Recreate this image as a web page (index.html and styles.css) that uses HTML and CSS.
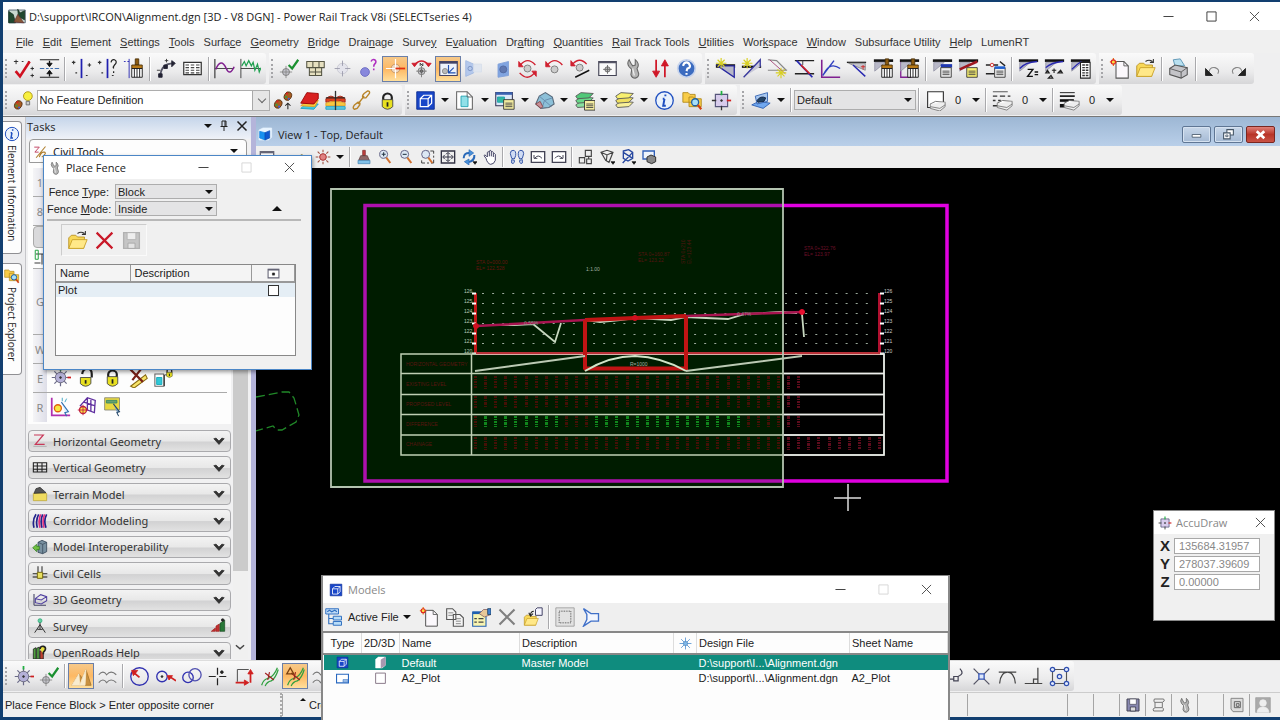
FILE: index.html
```html
<!DOCTYPE html>
<html lang="en">
<head>
  <meta charset="UTF-8">
  <title>Power Rail Track V8i</title>
  <link rel="stylesheet" href="styles.css">
</head>
<body>
  <div class="app">
    <header class="titlebar">
      <span class="app-icon" data-icon="app"></span>
      <h1>D:\support\IRCON\Alignment.dgn [3D - V8 DGN] - Power Rail Track V8i (SELECTseries 4)</h1>
      <div class="win-buttons" data-window="min max close"></div>
    </header>

    <nav class="menubar">
      <a href="#"><u>F</u>ile</a>
      <a href="#"><u>E</u>dit</a>
      <a href="#"><u>E</u>lement</a>
      <a href="#"><u>S</u>ettings</a>
      <a href="#"><u>T</u>ools</a>
      <a href="#">Surfa<u>c</u>e</a>
      <a href="#"><u>G</u>eometry</a>
      <a href="#"><u>B</u>ridge</a>
      <a href="#">Drai<u>n</u>age</a>
      <a href="#">Surve<u>y</u></a>
      <a href="#">E<u>v</u>aluation</a>
      <a href="#">Dr<u>a</u>fting</a>
      <a href="#"><u>Q</u>uantities</a>
      <a href="#"><u>R</u>ail Track Tools</a>
      <a href="#"><u>U</u>tilities</a>
      <a href="#">Wor<u>k</u>space</a>
      <a href="#"><u>W</u>indow</a>
      <a href="#">Subsurface Utility</a>
      <a href="#"><u>H</u>elp</a>
      <a href="#">LumenRT</a>
    </nav>

    <!-- main toolbars -->
    <div class="toolrow">
      <div class="group g-civil" data-tools="regress grade | ptline ptquery ptbrush | curve table | sine wave"></div>
      <div class="group g-snap" data-tools="snapcheck bricks target dotquery *orange north *winaxes cubefade cubeblue rotate arc arcline wintarget wrench updown help"></div>
      <div class="group g-profile" data-tools="prof1 prof2 prof3 prof4 prof5 prof6 profbrush profbrush2 | profdoc profred profbox | profz proftri proflist"></div>
      <div class="group g-standard" data-tools="newfile open | printer | undo redo"></div>
    </div>
    <div class="toolrow">
      <div class="group g-feature">
        <span data-tools="bulb"></span>
        <label class="select feature-select"><select aria-label="Feature definition"><option>No Feature Definition</option></select></label>
        <span data-tools="palettes redlayers section chain lock"></span>
      </div>
      <div class="group g-primary" data-tools="model v doc v card v gem v layers v yellow v info folders accudraw"></div>
      <div class="group g-attr">
        <span data-tools="bluetpl v |"></span>
        <label class="select level-select"><select aria-label="Active level"><option>Default</option></select></label>
        <span data-tools="| color"></span><span class="num">0</span>
        <span data-tools="v | style"></span><span class="num">0</span>
        <span data-tools="v | weight"></span><span class="num">0</span>
        <span data-tools="v"></span>
      </div>
    </div>

    <main class="work">
      <div class="side-tabs">
        <button><span data-icon="info"></span>Element Information</button>
        <button><span data-icon="folders"></span>Project Explorer</button>
      </div>

      <section class="tasks">
        <div class="tasks-head">
          <h2>Tasks</h2>
          <span class="caret"></span>
          <span data-icon="pin"></span>
          <span data-icon="close"></span>
        </div>
        <button class="civil-tools"><span data-icon="civil"></span>Civil Tools<i class="caret"></i></button>
        <div class="tasks-body">
          <div class="tasks-list">
            <div class="task-box">
              <div class="task-row"><b>1</b></div>
              <div class="task-row"><b>8</b></div>
              <button class="task-tab" aria-label="Civil tools group"><span data-icon="civil"></span></button>
              <div class="task-row short"><span data-icon="plumb"></span></div>
              <div class="task-row tall"><b>G</b></div>
              <div class="task-row"><b>W</b></div>
              <div class="task-row"><b>E</b><span data-tools="gear unlock lock ruler doclock"></span></div>
              <div class="task-row"><b>R</b><span data-tools="axispick gridgear docpick"></span></div>
            </div>
            <div class="accordion">
              <button><span data-icon="horiz"></span>Horizontal Geometry<i data-icon="chev"></i></button>
              <button><span data-icon="vert"></span>Vertical Geometry<i data-icon="chev"></i></button>
              <button><span data-icon="terrain"></span>Terrain Model<i data-icon="chev"></i></button>
              <button><span data-icon="corridor"></span>Corridor Modeling<i data-icon="chev"></i></button>
              <button><span data-icon="interop"></span>Model Interoperability<i data-icon="chev"></i></button>
              <button><span data-icon="cells"></span>Civil Cells<i data-icon="chev"></i></button>
              <button><span data-icon="geo3d"></span>3D Geometry<i data-icon="chev"></i></button>
              <button><span data-icon="survey"></span>Survey<i data-icon="surveygo"></i></button>
              <button><span data-icon="books"></span>OpenRoads Help<i data-icon="chev"></i></button>
            </div>
          </div>
          <div class="scrollbar"><div class="thumb"></div><span data-icon="down"></span></div>
        </div>
      </section>

      <section class="view">
        <div class="view-title">
          <span data-icon="viewcube"></span>
          <h2>View 1 - Top, Default</h2>
          <div class="mdi">
            <button aria-label="Minimize view"><span data-icon="mdimin"></span></button>
            <button aria-label="Restore view"><span data-icon="mdirestore"></span></button>
            <button class="red" aria-label="Close view"><span data-icon="mdiclose"></span></button>
          </div>
        </div>
        <div class="view-tools" data-tools="winsmall v blank sun v | broom zoomin zoomout zoomwin fit rotateview hand | feet viewprev viewnext | copyview clip clipmask display"></div>
        <div class="canvas"><svg id="drawing" aria-label="Alignment profile drawing"></svg></div>
      </section>
    </main>

    <div class="toolrow bottom">
      <div class="group g-bottom">
        <span data-tools="gear snapcheck | *hills contours | circler circle2 circles crosspt redaxes greenpt *greentri contours"></span>
        <span data-tools="nearpt intersect tangent perp boxpts"></span>
      </div>
    </div>
    <footer class="status">
      <span class="prompt">Place Fence Block &gt; Enter opposite corner</span>
      <span class="cell create"><i></i>Create</span>
      <span class="cell wide"></span>
      <span class="cell"></span>
      <span class="cell"></span>
      <span class="cell" data-icon="save"></span>
      <span class="cell" data-icon="scroll"></span>
      <span class="cell" data-icon="wrench"></span>
      <span class="cell"></span>
      <span class="cell" data-icon="sheet"></span>
      <span class="cell" data-icon="user"></span>
    </footer>
  </div>

  <!-- floating tool windows -->
  <section class="window fence">
    <div class="win-head">
      <span data-icon="wrench"></span>
      <h3>Place Fence</h3>
      <div class="win-buttons" data-window="min max close"></div>
    </div>
    <div class="fence-form">
      <label for="ftype">Fence <u>T</u>ype:</label>
      <span class="select"><select id="ftype"><option>Block</option></select></span>
      <i></i>
      <label for="fmode">Fence <u>M</u>ode:</label>
      <span class="select"><select id="fmode"><option>Inside</option></select></span>
      <i class="caret up"></i>
    </div>
    <div class="fence-tools" data-tools="open redx savegray"></div>
    <div class="fence-list">
      <table>
        <thead><tr><th class="c-name">Name</th><th>Description</th><th class="c-check"><span data-icon="winsmall"></span></th></tr></thead>
        <tbody><tr><td>Plot</td><td></td><td class="c-check"><input type="checkbox" aria-label="Plot active"></td></tr></tbody>
      </table>
    </div>
  </section>

  <section class="window models">
    <div class="win-head">
      <span data-icon="model"></span>
      <h3>Models</h3>
      <div class="win-buttons" data-window="min max close"></div>
    </div>
    <div class="models-tools">
      <span data-icon="tree"></span>
      <button class="active-file">Active File <i class="caret"></i></button>
      <span data-tools="newfile copydoc props grayx import | dotted funnel"></span>
    </div>
    <table>
      <thead>
        <tr><th class="m-type">Type</th><th class="m-dim">2D/3D</th><th class="m-name">Name</th><th class="m-desc">Description</th><th class="m-sun"><span data-icon="bluesun"></span></th><th class="m-file">Design File</th><th>Sheet Name</th></tr>
      </thead>
      <tbody>
        <tr class="selected"><td class="mid"><span data-icon="model"></span></td><td class="mid"><span data-icon="cube3d"></span></td><td>Default</td><td>Master Model</td><td></td><td>D:\support\I...\Alignment.dgn</td><td></td></tr>
        <tr><td class="mid"><span data-icon="sheetmodel"></span></td><td class="mid"><span data-icon="flat"></span></td><td>A2_Plot</td><td></td><td></td><td>D:\support\I...\Alignment.dgn</td><td>A2_Plot</td></tr>
      </tbody>
    </table>
  </section>

  <section class="window accudraw">
    <div class="win-head">
      <span data-icon="accudraw"></span>
      <h3>AccuDraw</h3>
      <div class="win-buttons" data-window="close"></div>
    </div>
    <div class="coords">
      <label for="cx">X</label><input id="cx" type="text" value="135684.31957">
      <label for="cy">Y</label><input id="cy" type="text" value="278037.39609">
      <label for="cz">Z</label><input id="cz" type="text" value="0.00000">
    </div>
  </section>

  <script src="script.js"></script>
</body>
</html>
```

FILE: styles.css
```css
* {
  box-sizing: border-box;
}
body {
  margin: 0;
  height: 100vh;
  overflow: hidden;
  position: relative;
  background: #123f70;
  font-family: "Liberation Sans", Arial, sans-serif;
  font-size: 11px;
  color: #222;
}
h1, h2, h3 {
  margin: 0;
  font-family: "Open Sans", "Noto Sans", sans-serif;
  font-weight: normal;
  white-space: nowrap;
}
button, select, input {
  font: inherit;
  color: inherit;
}
button {
  border: 0;
  padding: 0;
  background: none;
}
svg {
  display: block;
}
[data-icon] {
  display: inline-flex;
  flex: none;
  width: 18px;
  height: 18px;
}
[data-icon] svg {
  width: 100%;
  height: 100%;
}
.app {
  height: 100%;
  display: flex;
  flex-direction: column;
  padding: 2px 0 3px 3px;
}

/* title and menu */
.titlebar {
  display: flex;
  align-items: center;
  height: 28px;
  flex: none;
  background: #fff;
  padding-left: 5px;
}
.titlebar h1 {
  font-size: 11px;
  flex: 1;
  padding-left: 3px;
  color: #222;
}
.titlebar .win-buttons {
  padding-right: 4px;
}
.win-buttons {
  display: flex;
}
.win-buttons button {
  width: 43px;
  height: 24px;
  display: flex;
  justify-content: center;
  align-items: center;
}
.win-buttons svg {
  width: 11px;
  height: 11px;
}
.menubar {
  display: flex;
  flex: none;
  align-items: center;
  gap: 9px;
  height: 23px;
  background: #f0f0f0;
  padding-left: 13px;
}
.menubar a {
  color: #333;
  text-decoration: none;
  white-space: nowrap;
}

/* toolbars */
.toolrow {
  display: flex;
  flex: none;
  gap: 3px;
  height: 31px;
  background: #efeff0;
}
.menubar + .toolrow {
  height: 32px;
}
.group {
  display: flex;
  align-items: center;
  justify-content: space-between;
  flex: none;
  padding: 0 2px 0 7px;
  background: linear-gradient(#fafafa, #ebebec 60%, #d6d6d8);
  border-radius: 0 3px 3px 0;
  margin-bottom: 1px;
  position: relative;
}
.group::before {
  content: "";
  position: absolute;
  left: 2px;
  top: 6px;
  bottom: 6px;
  border-left: 2px dotted #a5a5a8;
}
.group [data-tools] {
  display: flex;
  align-items: center;
}
.g-civil { width: 263px; }
.g-snap { width: 433px; }
.g-profile { width: 391px; }
.g-standard { width: 155px; }
.g-feature { width: 399px; }
.g-primary { width: 332px; }
.g-attr {
  width: 382px;
  justify-content: flex-start;
}
.g-attr .caret {
  margin: 0 3px 0 4px;
}
.tool {
  width: 26px;
  height: 26px;
  display: flex;
  flex: none;
  align-items: center;
  justify-content: center;
  border: 1px solid transparent;
}
.tool svg {
  width: 21px;
  height: 21px;
}
.tool.active {
  border-color: #6b7fa8;
  background: linear-gradient(#f6c98a, #fdb863 50%, #ffdf9c);
}
.sep {
  width: 2px;
  height: 24px;
  flex: none;
  margin: 0 2px;
  border-left: 1px solid #a9a9ac;
  border-right: 1px solid #fff;
}
.caret {
  display: inline-block;
  flex: none;
  width: 0;
  height: 0;
  border: 4px solid transparent;
  border-top-color: #111;
  border-bottom: 0;
}
.caret.up {
  border-top: 0;
  border-bottom: 5px solid #111;
  border-left-width: 5px;
  border-right-width: 5px;
}
.select {
  position: relative;
  display: block;
}
.select::after {
  content: "";
  position: absolute;
  right: 4px;
  top: 50%;
  margin-top: -2px;
  border: 4px solid transparent;
  border-top-color: #111;
  border-bottom: 0;
  pointer-events: none;
}
.select select {
  appearance: none;
  width: 100%;
  height: 100%;
  border: 1px solid #adadad;
  background: #e4e4e5;
  padding: 0 2px;
  border-radius: 0;
}
.feature-select {
  width: 233px;
  height: 21px;
}
.feature-select select {
  background: linear-gradient(90deg, #fff calc(100% - 17px), #a9a9a9 0, #a9a9a9 calc(100% - 16px), #e6e6e6 0);
}
.feature-select::after {
  width: 5px;
  height: 5px;
  margin-top: -4px;
  right: 5px;
  border: solid #666;
  border-width: 0 1px 1px 0;
  transform: rotate(45deg);
}
.level-select {
  width: 122px;
  height: 20px;
}
.num {
  width: 14px;
  margin: 0 3px;
  text-align: center;
}

/* work area */
.work {
  flex: 1;
  min-height: 0;
  display: flex;
  border-top: 1px solid #777;
}
.side-tabs {
  width: 23px;
  flex: none;
  background: #ececee;
  border-right: 1px solid #c6c6ca;
  padding-top: 4px;
  display: flex;
  flex-direction: column;
  gap: 9px;
}
.side-tabs button {
  writing-mode: vertical-rl;
  display: flex;
  align-items: center;
  gap: 3px;
  width: 19px;
  padding: 4px 0 12px;
  background: #fdfdfd;
  border: 1px solid #8f8f93;
  border-left: 0;
  border-radius: 0 4px 4px 0;
  font-family: "Open Sans", "Noto Sans", sans-serif;
  font-size: 10px;
  white-space: nowrap;
}
.side-tabs [data-icon] {
  width: 16px;
  height: 16px;
}
.tasks {
  width: 225px;
  flex: none;
  display: flex;
  flex-direction: column;
  background: #f1f1f2;
  overflow: hidden;
  font-family: "Noto Sans", sans-serif;
}
.tasks-head {
  display: flex;
  align-items: center;
  height: 22px;
  flex: none;
  gap: 6px;
  padding: 0 3px 4px 1px;
  background: linear-gradient(#c5d5ea, #eff2f8);
}
.tasks-head h2 {
  flex: 1;
  font-size: 11px;
}
.tasks-head [data-icon] {
  width: 12px;
  height: 12px;
}
.civil-tools {
  display: flex;
  align-items: center;
  gap: 5px;
  height: 24px;
  flex: none;
  margin: 0 4px 0 3px;
  padding: 0 8px 0 3px;
  background: #fdfdfd;
  border: 1px solid #999;
  border-radius: 4px 4px 0 0;
}
.civil-tools [data-icon] {
  width: 15px;
  height: 15px;
}
.civil-tools .caret {
  margin-left: auto;
}
.tasks-body {
  flex: 1;
  min-height: 0;
  display: flex;
  gap: 2px;
  padding: 0 3px 1px 2px;
}
.tasks-list {
  width: 203px;
  display: flex;
  flex-direction: column;
  overflow: hidden;
}
.task-box {
  flex: none;
  background: #fdfdfd;
  padding: 5px 4px 2px 5px;
  margin-bottom: 6px;
}
.task-row {
  display: flex;
  height: 29px;
  border-bottom: 1px solid #aaa;
}
.task-row:last-child {
  border: 0;
}
.task-row b {
  width: 14px;
  display: flex;
  align-items: center;
  justify-content: center;
  font-weight: normal;
  color: #888;
  background: linear-gradient(90deg, #f5f5f7, #dedee8);
}
.task-row.short {
  height: 21px;
}
.task-row.tall {
  height: 66px;
}
.task-row [data-tools] {
  display: flex;
}
.task-tab {
  display: block;
  width: 60px;
  height: 22px;
  background: #d9d9db;
  border: 1px solid #aaa;
  border-radius: 4px;
}
.accordion {
  flex: 1;
  display: grid;
  grid-template-rows: repeat(9, 1fr);
  gap: 4px;
  margin-bottom: -5px;
}
.accordion button {
  display: flex;
  align-items: center;
  gap: 5px;
  min-height: 0;
  padding: 0 4px 0 3px;
  border: 1px solid #aaaaad;
  border-radius: 4px;
  background: linear-gradient(#f3f3f3, #e8e8e8 50%, #d2d2d3 55%, #e2e2e2);
  color: #333;
}
.accordion i {
  margin-left: auto;
}
.accordion [data-icon] {
  width: 16px;
  height: 16px;
}
.accordion i[data-icon="chev"] {
  width: 14px;
  height: 14px;
}
.scrollbar {
  flex: 1;
  display: flex;
  flex-direction: column;
  justify-content: space-between;
  background: #f0f0f0;
  padding-bottom: 5px;
}
.scrollbar .thumb {
  height: 83%;
  background: #cbcbcb;
}
.scrollbar [data-icon] {
  width: 14px;
  height: 14px;
}
.view {
  flex: 1;
  min-width: 0;
  display: flex;
  flex-direction: column;
  border-left: 5px solid #b4b4da;
}
.view-title {
  display: flex;
  align-items: center;
  gap: 5px;
  height: 29px;
  flex: none;
  padding: 5px 0 0 1px;
  background: linear-gradient(#9db7d4, #b9cfe9);
}
.view-title h2 {
  flex: 1;
  font-size: 11px;
}
.view-title > [data-icon] {
  width: 16px;
  height: 16px;
}
.mdi {
  display: flex;
  gap: 3px;
  padding-right: 5px;
}
.mdi button {
  width: 29px;
  height: 17px;
  display: flex;
  align-items: center;
  justify-content: center;
  border: 1px solid #5f7694;
  border-radius: 2px;
  background: linear-gradient(#c9d8ea, #a5bad4);
  box-shadow: inset 0 0 0 1px #d6e2f0;
}
.mdi .red {
  background: linear-gradient(#e08078, #b83428 50%, #c95245);
  border-color: #7a2620;
  box-shadow: none;
}
.mdi [data-icon] {
  width: 13px;
  height: 13px;
}
.view-tools {
  height: 22px;
  flex: none;
  display: flex;
  align-items: center;
  background: #efefef;
}
.view-tools .tool {
  width: 21px;
  height: 20px;
}
.view-tools .tool svg {
  width: 16px;
  height: 16px;
}
.view-tools .caret {
  margin: 0 3px;
}
.view-tools .sep {
  height: 20px;
}
.canvas {
  flex: 1;
  min-height: 0;
  background: #000;
}
.canvas svg {
  width: 100%;
  height: 100%;
}
#drawing text {
  font-size: 5px;
}

/* bottom bars */
.toolrow.bottom {
  border-top: 1px solid #ddd;
  height: 32px;
}
.g-bottom {
  width: 1071px;
}
.status {
  display: flex;
  flex: none;
  align-items: stretch;
  height: 25px;
  background: #f0f0f0;
  border-top: 1px solid #ccc;
  padding-right: 5px;
}
.status .prompt {
  width: 279px;
  padding: 6px 0 0 2px;
  border-right: 2px dotted #aaa;
}
.status .cell {
  width: 26px;
  height: auto;
  border-left: 1px solid #a5a5a5;
  margin: 1px 0 1px;
  padding: 3px;
  align-items: center;
  justify-content: center;
}
.status .create {
  flex: 1;
  display: flex;
  justify-content: flex-start;
  padding-left: 20px;
  gap: 3px;
}
.status .create i {
  border: 3px solid transparent;
  border-bottom-color: #111;
  border-top: 0;
  margin-left: -3px;
  margin-bottom: 11px;
}
.status .wide {
  width: 100px;
}
.status .cell svg {
  width: 16px;
  height: 16px;
}

/* floating windows */
.window {
  position: absolute;
  background: #f0f0f0;
}
.win-head {
  display: flex;
  align-items: center;
  height: 23px;
  background: #fff;
  padding-left: 4px;
  gap: 4px;
}
.win-head h3 {
  flex: 1;
  font-size: 11px;
}
.win-head [data-icon] {
  width: 14px;
  height: 14px;
}
.window .win-buttons button:nth-child(2) {
  opacity: 0.2;
}
.fence {
  left: 43px;
  top: 155px;
  width: 269px;
  height: 215px;
  border: 1px solid #4b86c6;
  box-shadow: 1px 2px 4px rgba(0, 0, 0, 0.4);
}
.fence-form {
  display: grid;
  grid-template-columns: 62px 102px 1fr;
  align-items: center;
  gap: 2px 6px;
  margin: 5px 10px 0 3px;
  padding-bottom: 3px;
  border-bottom: 2px solid #b8b8b8;
  white-space: nowrap;
}
.fence-form label {
  text-align: right;
}
.fence-form .select {
  height: 15px;
}
.fence-form .caret {
  justify-self: center;
  margin-left: 30px;
}
.fence-tools {
  display: flex;
  width: 86px;
  height: 32px;
  padding: 2px;
  gap: 1px;
  margin: 3px 0 8px 17px;
  border: 1px solid #ccc;
  border-right-color: #fafafa;
  border-bottom-color: #fafafa;
}
.fence-tools .tool:last-child {
  opacity: 0.6;
}
.fence-list {
  margin: 0 15px 0 11px;
  height: 92px;
  background: #fdfdfd;
  border: 1px solid #888;
}
table {
  width: 100%;
  border-collapse: collapse;
  table-layout: fixed;
}
th, td {
  text-align: left;
  font-weight: normal;
  padding: 0 4px;
  white-space: nowrap;
}
.fence-list th {
  height: 17px;
  border-right: 1px solid #999;
  border-bottom: 2px solid #999;
  background: #f4f4f4;
}
.fence-list td {
  height: 15px;
  background: #e5eef5;
  padding: 0 2px;
}
.fence-list .c-name {
  width: 74px;
}
.fence-list .c-check {
  width: 43px;
  text-align: center;
}
.fence-list .c-check [data-icon] {
  width: 15px;
  height: 13px;
  vertical-align: middle;
}
.fence-list input {
  appearance: none;
  width: 11px;
  height: 11px;
  margin: 0;
  border: 1px solid #333;
  background: #fff;
  vertical-align: middle;
}
.models {
  left: 321px;
  bottom: 0;
  width: 629px;
  height: 145px;
  background: #fdfdfd;
  border-left: 2px solid #888;
  border-right: 2px solid #888;
  border-top: 1px solid #888;
}
.models .win-head {
  height: 27px;
  gap: 5px;
  padding-left: 6px;
}
.models h3, .accudraw h3 {
  color: #888;
}
.models-tools {
  display: flex;
  align-items: center;
  height: 28px;
  background: #efefef;
  padding-left: 2px;
  gap: 5px;
}
.models-tools .active-file {
  display: flex;
  align-items: center;
  gap: 4px;
}
.models-tools [data-tools] {
  display: flex;
  align-items: center;
}
.models-tools .tool svg {
  width: 20px;
  height: 20px;
}
.models th {
  height: 22px;
  border: 1px solid #ddd;
  border-top: 2px solid #888;
  border-bottom: 2px solid #888;
}
.models th, .models td {
  padding: 0 2px;
}
.models td {
  height: 16px;
}
.models td [data-icon], .models th [data-icon] {
  width: 13px;
  height: 13px;
  vertical-align: middle;
}
.models .mid, .models .m-sun, .models .m-type {
  text-align: center;
}
.models .selected {
  background: #0f8c7e;
  color: #fff;
}
.m-type { width: 38px; }
.m-dim { width: 38px; }
.m-name { width: 120px; }
.m-desc { width: 154px; }
.m-sun { width: 23px; }
.m-file { width: 153px; }
.accudraw {
  right: 5px;
  top: 510px;
  width: 122px;
  height: 111px;
  border: 1px solid #888;
}
.accudraw .win-buttons button {
  width: 28px;
}
.coords {
  display: grid;
  grid-template-columns: 14px 86px;
  gap: 2px 2px;
  padding: 4px 4px;
}
.coords label {
  font-size: 15px;
  line-height: 16px;
  font-weight: bold;
  text-align: center;
}
.coords input {
  height: 16px;
  width: 100%;
  border: 1px solid #a8a8a8;
  background: #fff;
  color: #888;
  padding: 0 4px;
}
```

FILE: script.js
```js
// path helper: d, stroke, stroke width, fill
const p = (d, s = '#333', w = 1, f = 'none') => `<path d="${d}" stroke="${s}" stroke-width="${w}" fill="${f}"/>`;
const c = (x, y, r, s = '#333', f = 'none', w = 1) => `<circle cx="${x}" cy="${y}" r="${r}" stroke="${s}" fill="${f}" stroke-width="${w}"/>`;
const t = (x, y, ch, col, size) => `<text x="${x}" y="${y}" fill="${col}" font-size="${size}" font-weight="bold">${ch}</text>`;

const brush = p('M14 1h4v7h-4z', '#4a3008', 1, '#8a5a10') + p('M10 8h12v4H10z', '#4a3008', 1, '#b87a18') + p('M10 12h12v10H10z', '#111', 1, '#fff') + p('M13 12v10M16 12v10M19 12v10', '#111', 1);
const tri = p('M1 3h22', '#111', 3) + p('M2 5h12L2 15z', '#99a', 1, '#b8b8c8');
const burst = p('M7 0v12M1 6h12M3 2l8 8M11 2l-8 8', '#d8d020', 1.3);
const note = (x, y, f) => p(`M${x} ${y}h12v11h-12z`, '#333', 1, f) + p(`M${x + 2} ${y + 4}h8M${x + 2} ${y + 6}h8M${x + 2} ${y + 8}h8`, '#444', 1);
const lens = c(10, 8, 6, '#668', '#dce8f4', 1.5) + p('M14 13l6 8', '#d07030', 3);
const target = c(12, 15, 4, '#777', '#c8c8cc') + p('M12 9v13M6 15h12', '#777') + c(12, 15, 1.5, '#555', '#777');
const folder = p('M2 9l3-3h5l2 2h8l-1 13H2z', '#b89020', 1, '#f8d858') + p('M2 21l4-10h17l-4 10z', '#c8a028', 1, '#ffe888');
const padlock = c(12, 9, 5, '#222', 'none', 2.5) + p('M6 11h12v8q-6 6-12 0z', '#444', 1, '#e8e020') + p('M12 14v5', '#222', 2);
const stack = p('M3 15l6-3 11 1-6 4z', '#666', 1, '#fff') + p('M3 15v5l11 3 6-5v-5M3 18l11 2 6-4', '#777', 1, '#eee');
const hillsWave = p('M2 10q5-6 9 0q5-6 11 0M2 19q5-6 9 0q5-6 11 0', '#777', 1.3);
const pal = (x, y) => `<ellipse cx="${x}" cy="${y}" rx="4" ry="5" fill="#a85c20" stroke="#5a3010" transform="rotate(25 ${x} ${y})"/>` + c(x - 1, y - 3, 1.2, 'none', '#e02020') + c(x - 2, y + 1, 1.2, 'none', '#30a040') + c(x + 1, y + 3, 1.2, 'none', '#4060e0');
const cubeIn = p('M2 2h20v20H2z', '#0a2a90', 1, '#1846c8') + p('M6 10h9v9H6zM6 10l4-4h9v9l-4 4M15 10l4-4', '#fff', 1.4);
const greenRoad = p('M3 22q2-7 8-8q6-2 10-12M7 23q2-5 7-6q5-3 8-13', '#30a040', 1.4) + p('M7 8l10 8M12 7l-2 9', '#a02020', 1.3);
const mkLayers = (a, b, d) => p('M2 17l6-4 14 1-5 5-13 1z', '#555', 1, d) + p('M2 12l6-4 14 1-5 5-13 1z', '#555', 1, b) + p('M2 7l6-4 14 1-5 5-13 1z', '#555', 1, a);

const icons = {
  app: p('M1 4h22v17H1z', '#345', 1, '#c8d8d0') + p('M1 6l6 4 3 11H1zM13 3l3 5 6-3v12l-8-4z', '#143020', 1, '#204830') + p('M8 20l5-10 8 11z', '#633', 1, '#885838'),
  regress: p('M1 4h5M3.5 2v5M10 4h2M17 4h2M20 12h4M22 10v4M20 20h4M22 18v4', '#222') + p('M3 15l5 6L19 4', '#d01020', 3),
  grade: p('M1 2h22M1 22h22', '#222', 1.3) + p('M1 12h5M8 12h3M13 12h3M18 12h5', '#4070b0', 1.3) + p('M12 3v6M12 21v-6', '#111', 1.5) + p('M9 6h6l-3 4zM9 18h6l-3-4z', '#111', 1, '#111'),
  ptline: p('M12 1v22', '#2020b0', 2) + p('M1 5h4M3 3v4M19 8h4M21 6v4M5 17h2M17 20h2', '#333', 1.3),
  ptquery: p('M12 1v22', '#2020b0', 2) + p('M1 5h4M3 3v4M5 17h2M17 20h2', '#333', 1.3) + p('M16 5q1-4 4-3q4 2 0 6q-2 2-1 4M19 15v2', '#222', 1.4),
  ptbrush: p('M1 4h2M5 4h2M7 1v22', '#2020b0') + brush,
  curve: p('M5 20q1-14 15-14', '#556', 2) + p('M18 3l4 3-4 4z', '#223', 1, '#223') + p('M3 18h4v4H3zM9 8h4v4H9z', '#223', 1, '#223') + p('M10 3h4M12 1v4M1 14h4', '#333'),
  table: p('M2 5h20v14H2z', '#333', 1.4, '#fff') + p('M4 8h4M10 8h4M16 8h4M4 11h4M10 11h4M16 11h4M4 14h4M10 14h4M16 14h4M4 17h4M10 17h4M16 17h4', '#444', 1.3),
  sine: p('M1 1v22', '#333', 1.3) + p('M1 12h22', '#333') + p('M2 13q6-14 12-1q4 9 9-2', '#802090', 1.8),
  wave: p('M1 1v22M1 12h22', '#333') + p('M2 9l3-5 2 5 3-6 3 6 2-4 2 9 3-7 2 9 2-5', '#20a050', 1.4),
  snapcheck: c(8, 16, 4, '#777', '#c4c4cc') + p('M8 9v14M1 16h14', '#888') + p('M11 8l4 4 7-10', '#1a9030', 2.5),
  bricks: p('M2 4h20v7H2zM5 11h14v9H5zM9 4v7M16 4v7M12 11v9M5 16h14', '#554', 1.2, '#e6e0c0'),
  target: c(12, 12, 6, '#c8c8d0', '#e4e4ec') + p('M12 3v6M12 15v6M3 12h6M15 12h6', '#99a'),
  dotquery: c(8, 16, 5, '#6868c0', '#8888dc') + p('M15 4q1-3 4-2q3 2 0 5q-1 1-1 3M18 12v2', '#b030c0', 1.8),
  orange: c(12, 12, 5, '#c09060', '#f0d8c0') + p('M12 1v22M1 12h11', '#fff', 1.4) + p('M12 12h11', '#e03010', 2),
  north: p('M4 8q8-9 16 0', '#d02030', 1.6) + p('M1 6l3 4 3-4zM23 6l-3 4-3-4z', '#d02030', 1, '#d02030') + target + p('M10.500 9V6l3 3V6', '#222', 1),
  winaxes: p('M2 4h20v16H2z', '#446', 1.3, '#eef2fa') + p('M2 5h20', '#446', 3) + p('M12 8v9h8M12 17l6-6', '#2050b0', 1.3) + c(8, 15, 3, '#888', '#bbb'),
  cubefade: p('M2 3l9 4v10l-9 4z', '#a0b8e0', 1, '#b4c8ec') + p('M11 7h9v9h-9z', '#d8dfea', 1, '#e0e6f0') + c(7, 12, 2.5, '#7890c0'),
  cubeblue: p('M8 7l12-3v16l-12 2z', '#80a0d8', 1, '#80a4e0') + c(14, 13, 4, '#5068a0', '#6078b0'),
  rotate: p('M4 8q8-10 17 0M3 17q9 10 17 0', '#d02030', 1.6) + p('M2 4v6h5zM22 21v-6h-5z', '#d02030', 1, '#d02030') + c(12, 12, 4, '#777', '#ccc'),
  arc: p('M4 8q8-10 17 0', '#d02030', 1.6) + p('M2 4v6h5z', '#d02030', 1, '#d02030') + c(12, 13, 4, '#777', '#ccc'),
  arcline: p('M3 7q8-9 16 0', '#d02030', 1.6) + p('M1 3v6h5z', '#d02030', 1, '#d02030') + c(11, 11, 4, '#777', '#ccc') + p('M6 22l16-8', '#111', 1.6),
  wintarget: p('M2 4h20v16H2z', '#445', 1.3, '#fafafa') + p('M2 5h20', '#556', 2) + c(12, 13, 3, '#666', '#bbb') + p('M12 8v10M7 13h10', '#666'),
  wrench: p('M7 2q-3 4 0 8l3 3-1 6q1 4 5 4q4-1 4-5l-2-6q3-4 0-8l-2-2v6l-3 1-2-3z', '#666', 1.2, '#b4b4b4') + p('M11 12l2 8', '#eee', 1.4),
  updown: p('M7 2v16M17 22V6', '#d01828', 2) + p('M3 15h8l-4 7zM13 9h8l-4-7z', '#d01828', 1, '#d01828'),
  help: c(12, 12, 10, '#c8d4ec', '#3c6cc0', 2) + p('M8 9q1-4 4-4t4 4q0 2-3 3l-1 3M12 17v2', '#fff', 2.4),
  prof1: p('M1 8h22M1 10h22', '#111', 2) + p('M3 9l19 13V9z', '#2828a0', 1.5, '#b8b8c8') + burst,
  prof2: p('M1 10h22', '#111', 2.5) + p('M3 22L22 2v8', '#38389c', 1.5, '#c8c8d8') + burst,
  prof3: p('M1 2l10 1 11 11M1 14h22', '#888', 1.4) + p('M3 2l18 16', '#a04070') + '<g transform="translate(9 11)">' + burst + '</g>',
  prof4: p('M1 3h22M1 18h22', '#222', 1.6) + p('M3 3l18 19', '#2828b0', 2) + p('M8 8l10 10', '#d02020', 2) + p('M10 3v5', '#333'),
  prof5: p('M2 2v20h21', '#802090', 1.8) + p('M3 20L16 3M5 17q7-13 18-5', '#3040c0', 1.6),
  prof6: p('M1 5h22', '#222', 1.6) + p('M3 6h19v8z', '#888', 1, '#c4c4cc') + p('M8 8l14 13', '#2828b0', 1.6) + p('M17 10h5M19.5 8v5', '#d02020'),
  profbrush: tri + brush, profbrush2: p('M2 2v20h12', '#802090', 1.5) + tri + brush,
  profdoc: tri + p('M10 9h13', '#2038b0', 4) + note(10, 11, '#eee'),
  profred: tri + p('M2 13L22 4', '#a01820', 3) + note(10, 11, '#f8f070'),
  profbox: p('M1 8h5M10 8h5M17 4l6 5M1 18h10', '#222', 1.5) + c(8, 8, 2, '#d02020') + note(11, 11, '#eee') + p('M11 11h12', '#2060d0', 3),
  profz: tri + p('M2 12Q8 5 22 4', '#2828b0', 1.6) + p('M11 13h6l-6 8h6M19 16h4M19 19h4', '#111', 1.6),
  proftri: tri + p('M2 11Q8 5 22 4', '#2828b0', 1.6) + p('M2 17h4l-2-3zM16 17h5l-2-3zM5 23h5l-2-3zM9 14h5M11.5 12v5', '#222', 1.3),
  proflist: tri + p('M2 13Q8 7 13 4', '#2828b0', 1.6) + p('M12 5h11v18H12z', '#222', 1.2, '#fff') + p('M14 8h3M18 8h3M14 11h3M18 11h3M14 14h3M18 14h3M14 17h3M18 17h3M14 20h3M18 20h3', '#333', 1.5),
  newfile: p('M8 4h9l5 5v14H8z', '#555', 1.2, '#fbf8fc') + p('M17 4v5h5', '#555') + p('M5 0v9M1 4.5h8', '#e07010', 1.3) + c(5, 4.5, 2.4, '#e02020', '#f8e040', 1.3),
  open: folder + p('M12 4q4-3 8 0M21 1v4h-4', '#333', 1.2),
  printer: p('M6 2l8-1 5 8H8z', '#5590b0', 1, '#b8e0f0') + p('M2 12l6-4 14 3v8l-7 4-13-4z', '#555', 1.2, '#c4c4c8') + p('M2 12l13 4 7-5M15 16v7', '#555'),
  undo: p('M8 16q1-6 7-5 6 2 3 7', '#888', 1.3) + p('M4 12v8h8z', '#222', 1, '#222'),
  redo: p('M16 16q-1-6-7-5-6 2-3 7', '#888', 1.3) + p('M20 12v8h-8z', '#222', 1, '#222'),
  bulb: pal(6, 17) + c(17, 7, 5, '#a89010', '#f8f040') + p('M15 13h4v4h-4z', '#666', 1, '#ccc'),
  palettes: pal(6, 16) + pal(17, 7) + p('M17 22v-6M14 18l3-3 3 3', '#222', 1.2),
  redlayers: p('M2 21l7-6 13 1-5 6z', '#20a0c0', 1, '#40c8e0') + p('M2 18l7-6h13l-4 7z', '#e0a020', 1, '#f8c840') + p('M2 15L9 3l13 1v6l-5 6z', '#900', 1, '#d82020'),
  section: p('M1 10q6-6 11 0q5-6 11 0v4q-6-3-11 0q-5-3-11 0z', '#a02010', 1, '#e04020') + p('M1 15q11-4 22 0v3H1z', '#e0a020', 1, '#f8c840') + p('M1 19h22v3H1z', '#20a0c0', 1, '#60c8e0') + p('M12 1v22', '#333', 1.5) + p('M1 9h22', '#222', 1.3),
  chain: p('M4 22q-3-1 0-5l4-3q3 0 2 3l-3 4zM14 9q-2-2 1-5l4-3q3 0 2 3l-4 5zM8 16l7-9', '#b88428', 1.6),
  lock: padlock,
  unlock: p('M7 8q1-6 6-6t5 6v4', '#222', 2.5) + p('M5 12h12v7q-6 6-12 0z', '#444', 1, '#e8e020') + p('M11 15v4', '#222', 2),
  model: cubeIn,
  doc: p('M3 2h12l6 6v14H3z', '#666', 1.2, '#fff') + p('M8 7h8v12H8z', '#20a0b0', 1, '#90e0e8') + p('M15 2v6h6', '#666'),
  card: p('M2 3h19v15H2z', '#335', 1.2, '#dce8f8') + p('M2 4h19', '#3a62b0', 3) + p('M4 8h8v6H4z', '#20a0b0', 1, '#30b8a0') + note(11, 11, '#f4eca0'),
  gem: p('M2 16L6 7l7-4 8 5 2 8-6 4-9 1z', '#567', 1.2, '#8cc0d8') + p('M6 7l6 5 9-3M12 12l-3 9M12 12l8 7', '#68a') + p('M2 16l5-3 3 6-2 2z', '#844', 1, '#c89098'),
  layers: mkLayers('#50c878', '#68d888', '#88e0a0') + note(12, 12, '#f4eca0'),
  yellow: mkLayers('#f8f070', '#f0e060', '#f8f098'),
  info: c(12, 12, 10, '#2050c0', '#eaf2fc', 1.5) + p('M13 5v2M12 10l-1.5 8h3M10 10h2', '#2050c0', 2.2),
  folders: p('M1 3h6l2 2h6v9H1zM8 8h5l2 2h7v9H8z', '#b08818', 1, '#f8cc48') + c(15, 14, 4, '#2060a0', '#a8e0f8', 1.5) + p('M18 17l4 5', '#d04010', 2.5),
  accudraw: p('M5 5h14v14H5z', '#55557a', 1.3, '#d8ccec') + p('M12 1v5', '#20b040', 2) + p('M12 18v5M1 12h5', '#333', 1.5) + p('M18 12h5', '#d02020', 2) + c(12, 12, 1, '#333', '#333'),
  bluetpl: p('M2 17l8-4 13 2-8 6z', '#3060b0', 1, '#70a8f0') + p('M6 7l14-4v10L8 16z', '#3060b0', 1, '#a8c8f0') + p('M8 12q4-6 10-3l-2 4-7 1z', '#124', 1, '#246'),
  color: p('M3 2h18v18H3z', '#333', 1.3, '#fff') + '<g transform="translate(3 1)">' + stack + '</g>',
  style: p('M1 2h17', '#444') + p('M1 7h5M9 7h6M18 7h3M1 12h3M7 12h3M1 18h9', '#333', 1.5) + '<g transform="translate(3 0)">' + stack + '</g>',
  weight: p('M1 3h17', '#333', 1.2) + p('M1 7h17', '#222', 2) + p('M1 12h16', '#111', 3) + p('M1 18h14', '#111', 4) + '<g transform="translate(3 0)">' + stack + '</g>',
  pin: p('M8 2h8v11H8zM14 2v11M5 13h14M12 13v9', '#222', 2),
  close: p('M3 3l18 18M21 3L3 21', '#222', 3),
  civil: p('M2 5h8l-7 8h6', '#c04060', 1.5) + p('M5 22L20 4M10 21q3-9 8-8t-4 8', '#b08030', 1.8),
  plumb: p('M2 20h8M4 8h20M12 8v14', '#333', 1.3) + p('M3 3h4v12H3z', '#20a040', 1.3),
  gear: p('M12 2v20M2 12h20M5 5l14 14M19 5L5 19', '#6a6a88', 1.4) + c(12, 12, 6, '#667', '#b4b0d8') + p('M12 0v4', '#20b040', 2) + p('M20 12h4', '#d02020', 2) + c(12, 12, 1, '#333', '#333'),
  ruler: p('M3 22l17-13 2 4L7 24z', '#886a10', 1.2, '#f8e468') + p('M2 2l15 15M16 1L5 15', '#7a2018', 2.5),
  doclock: p('M1 8h10v14H1z', '#666', 1.2, '#fff') + p('M3 12h6v8H3z', '#10a8b8', 1, '#30c8d8') + p('M12 22V9h5', '#333') + '<g transform="translate(11 0) scale(.55)">' + padlock + '</g>',
  axispick: p('M2 2v20h21', '#b030b0', 2) + c(9, 14, 4, '#e06010', '#f8e840', 1.5) + p('M13 7l8 11-4 1 2 4', '#3070b0', 1.3, '#dff0ff') + p('M14 2v4M19 3l-2 4', '#30a0c0'),
  gridgear: p('M5 11L13 2l9 3-1 14-8-3zM13 2v14M9 7l12 4M17 3v15', '#6030a0', 1.5) + c(8, 16, 4, '#c02040', '#f8e840', 1.5) + p('M8 10v12M2 16h12', '#c02040'),
  docpick: p('M3 2h17v14H3z', '#887', 1, '#e8d840') + p('M5 5h12v3H5z', '#386', 1, '#68a070') + p('M13 9l7 9-3 1 2 4', '#246', 1.2, '#80a0c0'),
  horiz: p('M3 3h14L5 17h14', '#c83858', 1.8) + p('M2 20h20', '#999'),
  vert: p('M2 4h20v14H2zM2 9h20M2 14h20M8 4v14M15 4v14', '#222', 1.6),
  terrain: p('M2 11h20v11H2z', '#b8a028', 1, '#f0dc60') + p('M3 11l3-7 6-2 9 8z', '#222', 1, '#555'),
  corridor: p('M3 22Q0 11 6 2M8 22Q5 11 10 2M15 22Q12 11 16 2M21 22q-4-11 1-20', '#22228a', 2.5) + p('M12 22Q9 11 13 2M18 22q-3-11 1-20', '#e03080', 2.5),
  interop: p('M9 5l6-3 7 3v14l-6 3-7-2z', '#345', 1.2, '#7890a0') + p('M9 5l7 3v14M16 8l6-3', '#345') + p('M1 13l6-5v3h4v5H7v3z', '#287818', 1, '#70c040'),
  cells: p('M1 13h22M1 18h22M9 2v9M15 2v9', '#555', 2) + p('M8 11h8v9H8z', '#776a10', 1.5, '#e8e060'),
  geo3d: p('M3 20V3M3 20h18', '#446', 1.6) + p('M5 10l8-6 9 3v6l-8 5-9-2zM5 10l9 2 8-5', '#5040a0', 1.6),
  survey: c(12, 4, 3, '#20a070', '#60d0a0') + p('M12 7v10M12 10L4 22M12 10l8 12M8 17h8', '#333', 1.5),
  surveygo: p('M2 20l6-5v5zM9 20v-8l5-3v11z', '#a02020', 1, '#c03030') + p('M15 20V8l7-5v17z', '#184820', 1, '#287838') + c(19, 3, 2, '#222', '#222'),
  books: p('M2 21V6l4-2v17zM7 21V5l4-2v18z', '#222', 1.2, '#50a040') + p('M12 21V9l5-1v13z', '#222', 1.2, '#c04030') + p('M12 6q1-5 5-4t3 5q-1 2-3 4v3', '#222', 2.5, '#e8e040'),
  chev: p('M3 8l4-1 5 5 5-5 4 1-9 10z', '#222', 1, '#333'),
  down: p('M5 9l7 6 7-6', '#444', 2.5),
  viewcube: p('M3 6l6-3h13v14l-5 4H3z', '#e8f4ff', 1, '#e8f4ff') + p('M4 8l8 2v11l-8-3z', '#1080e0', 1, '#1890f0') + p('M12 10l7-3v11l-7 3z', '#0848b0', 1, '#1058d0'),
  mdimin: p('M4 12h16v5H4z', '#456', 1.5, '#fff'),
  mdirestore: p('M9 3h12v10H9z', '#456', 2, '#fff') + p('M3 9h12v11H3z', '#456', 2, '#fff') + p('M7 13h4v3H7z', '#456', 1.5),
  mdiclose: p('M5 6l14 13M19 6L5 19', '#fff', 5),
  winsmall: p('M2 4h20v16H2z', '#667', 2, '#fff') + p('M2 5h20', '#667', 3) + p('M10 11h4v4h-4z', '#222', 1, '#222'),
  blank: p('M5 20q0-9 7-12l6 6z', '#886', 1, '#b8a830'),
  sun: c(12, 12, 5, '#a83030', '#e08080', 1.5) + p('M12 1v4M12 19v4M1 12h4M19 12h4M4 4l3 3M17 17l3 3M20 4l-3 3M7 17l-3 3', '#a05040', 1.6),
  broom: p('M10 2h4v8h-4z', '#722', 1, '#c04040') + p('M7 10h10l3 7H4z', '#533', 1, '#906868') + p('M3 17h18v5H3z', '#4080b0', 1, '#80c0e8'),
  zoomin: lens + p('M7 8h6M10 5v6', '#234', 1.6),
  zoomout: lens + p('M7 8h6', '#234', 1.6),
  zoomwin: p('M11 3h3M17 3h5v4M22 10v3M22 16v5h-4M15 21h-3M9 21H4v-4', '#444', 1.5) + lens,
  fit: p('M2 3h20v18H2z', '#334', 2) + p('M12 6v12M5 12h14M9 8l3-3 3 3M9 16l3 3 3-3M7 9l-3 3 3 3M17 9l3 3-3 3', '#334', 1.5),
  rotateview: p('M4 14q0-9 10-8M20 9q1 9-10 11', '#2868b8', 3) + p('M12 1l7 5-7 5zM12 24l-7-5 7-4z', '#2868b8', 1, '#4890d8') + p('M18 19h6l-3 4z', '#111', 1, '#111'),
  hand: p('M6 14L3 10q1-2 3 0l2 2V5q1-2 3 0V3q1-2 3 0v2q2-2 3 0v2q2-1 3 1v9q-2 6-7 6-5-1-7-9M11 5v6M14 5v6M17 7v5', '#446', 1.5, '#fff'),
  feet: p('M6 2q5 0 4 8L8 15l-4-1L2 7q0-5 4-5zM4 16l4 1v3q-2 3-4 1zM18 2q-5 0-4 8l2 5 4-1 2-7q0-5-4-5zM20 16l-4 1v3q2 3 4 1z', '#3858a8', 1.5, '#d0dcf4'),
  viewprev: p('M2 4h20v16H2z', '#445', 2, '#fff') + p('M7 14q5-7 11 0M6 9v5h5', '#445', 1.5),
  viewnext: p('M2 4h20v16H2z', '#445', 2, '#fff') + p('M6 14q5-7 11 0M18 9v5h-5', '#445', 1.5),
  copyview: p('M11 2h9v9h-9zM2 13h8v8H2zM13 15h7v7h-7zM16 11v4', '#444', 1.7),
  clip: p('M3 5l9-3 9 3-6 15-5-3zM3 5l9 4 9-4M12 9l-1 9', '#444', 1.7) + p('M18 19h6l-3 4z', '#111', 1, '#111'),
  clipmask: p('M5 3l8-2 6 4v9l-7 4-7-4zM5 5l14 9M19 5L4 21', '#2848a0', 2) + p('M18 19h6l-3 4z', '#111', 1, '#111'),
  display: p('M3 3h17v12H3z', '#3060b8', 2, '#eef4fc') + p('M9 12l6-3 7 3v7l-6 3-7-3z', '#333', 1.5, '#888'),
  hills: p('M1 22L9 9l4 5 4-10 6 18z', '#a87830', 1, '#c89040') + p('M9 9l1 13H1zM17 4l-1 18h-6l3-8z', '#f8e8c8', 1, '#f8ecd0'),
  contours: hillsWave,
  circler: c(12, 12, 10, '#3030b0', 'none', 1.5) + p('M12 13L6 8', '#d02020', 2) + p('M3 5h7l-5 6z', '#d02020', 1, '#d02020'),
  circle2: c(8, 12, 6, '#3030b0', 'none', 1.5) + c(8, 12, 1, '#222', '#222') + p('M24 17l-6-4', '#d02020', 2) + p('M14 11h6l-4 5z', '#d02020', 1, '#d02020'),
  circles: c(8, 13, 6, '#3030b0', 'none', 1.5) + c(16, 10, 7, '#5050b0', 'none', 1.5),
  crosspt: p('M12 2v8M12 14v8M2 12h8M14 12h8', '#222', 1.4) + c(17, 7, 1.5, '#222', '#222'),
  redaxes: p('M5 4h13M5 4v14', '#555', 1.2) + p('M3 19h10M20 19V7', '#d02020', 2) + p('M13 16v6l5-3zM17 9h6l-3-5z', '#d02020', 1, '#d02020'),
  greenpt: greenRoad,
  greentri: greenRoad + p('M2 9h8L6 2z', '#7a4010', 1.5),
  nearpt: p('M2 15h8M10 12h5v5h-5zM15 12q8-3 2-9', '#445', 1.4),
  intersect: p('M3 3l18 18M21 3L3 21', '#556', 1.5) + p('M9 9h6v6H9z', '#3858b8', 1.5, '#dce6fa'),
  tangent: p('M2 7h20M3 20q1-13 9-13t9 13', '#444', 1.4),
  perp: p('M2 20h20M17 2v18M12 20v-5h5', '#444', 1.4),
  boxpts: p('M4 4h16v16H4z', '#555', 1.3) + c(4, 4, 2.5, '#3050b0', '#e0e8fc', 1.4) + c(20, 4, 2.5, '#3050b0', '#e0e8fc', 1.4) + c(4, 20, 2.5, '#3050b0', '#e0e8fc', 1.4) + c(20, 20, 2.5, '#3050b0', '#e0e8fc', 1.4) + c(12, 12, 2.5, '#3050b0', '#e0e8fc', 1.4),
  save: p('M3 3h18v18H3z', '#445', 1.5, '#8888b0') + p('M7 3h10v8H7z', '#445', 1, '#fff') + p('M8 15h8v6H8z', '#223', 1, '#ddd'),
  savegray: p('M3 3h18v18H3z', '#888', 1.5, '#aaa') + p('M7 3h10v8H7z', '#888', 1, '#eee') + p('M8 15h8v6H8z', '#777', 1, '#ddd'),
  scroll: p('M5 3h14q3 3-2 5v8q3 1 1 5H4q-3-3 2-5V8q-3-1-1-5zM5 8h12M6 16h11', '#777', 1.5, '#eee'),
  sheet: p('M3 2h18v20H6L3 18z', '#888', 1.5, '#ddd') + p('M8 7h9v9H8z', '#666', 1.5) + p('M11 10h4v4h-4z', '#666', 1.5),
  user: p('M1 1h22v22H1z', '#999', 1, '#aaa') + c(12, 9, 5, '#eee', '#eee') + p('M3 23q1-8 9-8t9 8z', '#eee', 1, '#eee'),
  redx: p('M3 3l18 18M21 3L3 21', '#c81828', 2.5),
  grayx: p('M3 3l18 18M21 3L3 21', '#808080', 2.5),
  copydoc: p('M2 2h7l4 4v9H2zM10 9h8l4 4v10H10z', '#555', 1.3, '#f4f4f4') + p('M4 7h6M4 10h6M13 14h6M13 17h6M13 20h6', '#777'),
  props: p('M2 6h16v17H2z', '#2060b0', 1.3, '#f8f4b0') + p('M2 7h16', '#2060b0', 3) + p('M4 14h3M9 14h6M4 18h3M9 18h6', '#444', 1.5) + p('M10 8l5-5h9v6l-8 3z', '#866', 1, '#e8c898') + p('M20 2h4v7h-4z', '#246', 1, '#4080d0'),
  import: '<g transform="translate(0 5) scale(.8)">' + folder + '</g>' + p('M17 1h6v9h-8V3z', '#446', 1.2, '#f4f4ff') + p('M13 5q-4 0-4 5M7 7l2 4 3-3', '#222', 1.3),
  dotted: p('M1 1h22v22H1z', '#999', 1, '#e2e2e2') + '<path d="M5 5h14v14H5z" stroke="#333" stroke-dasharray="1 1" fill="none"/>',
  funnel: p('M3 2l9 6h9v9h-9l-9 6 4-8V9z', '#4070c8', 1.6, '#f2f6fe'),
  tree: p('M1 1h17v7H1z', '#3070c0', 1.3, '#c0dcf8') + p('M5 8v13h6M5 14h6M3 5l3-2 3 2 4-2 3 2', '#3070c0', 1.5) + p('M11 11h11v5H11zM11 18h11v5H11z', '#3070c0', 1.3, '#b8dcf8'),
  bluesun: p('M12 1v22M1 12h22M4 4l16 16M20 4L4 20', '#5090d0', 1.5) + c(12, 12, 4, '#3070b0', '#80b8e8'),
  cube3d: p('M3 6l5-4h13v15l-6 5H3z', '#fff', 1, '#fff') + p('M13 7l8-5v15l-8 5z', '#a090a8', 1, '#a898b0'),
  sheetmodel: p('M1 4h22v16H1z', '#2868c0', 2, '#fff') + p('M13 14h9v5h-9z', '#2868c0', 1, '#a0c0e8'),
  flat: p('M3 2h18v19H3z', '#887888', 1.8, '#fff'),
  min: p('M1 12h22', '#333', 2),
  max: p('M2 2h20v20H2z', '#333', 2)
};

const svg = (name) => `<svg viewBox="0 0 24 24" aria-hidden="true">${icons[name]}</svg>`;

document.querySelectorAll('[data-icon]').forEach(el => {
  el.innerHTML = svg(el.dataset.icon);
});

// "|" is a separator, "v" a drop arrow, "*" marks a pressed button
document.querySelectorAll('[data-tools]').forEach(el => {
  el.innerHTML = el.dataset.tools.split(' ').map(n => {
    if (n === '|') return '<span class="sep"></span>';
    if (n === 'v') return '<span class="caret"></span>';
    const on = n[0] === '*';
    if (on) n = n.slice(1);
    return `<button class="tool${on ? ' active' : ''}" aria-label="${n}">${svg(n)}</button>`;
  }).join('');
});

document.querySelectorAll('[data-window]').forEach(el => {
  el.innerHTML = el.dataset.window.split(' ').map(n => {
    const body = n === 'close' ? p('M2 2l20 20M22 2L2 22', '#444', 2) : icons[n];
    return `<button aria-label="${n}"><svg viewBox="0 0 24 24">${body}</svg></button>`;
  }).join('');
});

// profile drawing
function drawProfile() {
  let s = '<g transform="translate(-256 -168)">';
  s += '<path d="M331 189h452v298H331z" fill="#001c00"/>';
  s += p('M783 205.5H365V481H783', '#ae10ae', 3.5) + p('M783 205.5H947V481H783', '#e000e0', 3.5);

  // level grid
  [293, 303, 313, 323, 334, 343].forEach(y => {
    s += `<path d="M482 ${y}.5H874" stroke="#9aa89a" stroke-dasharray="2 8.1"/>`;
  });
  s += p('M475.5 293v60', '#c01818', 3) + p('M879.5 293v60', '#b01030', 3);
  [126, 125, 124, 123, 122, 121, 120].forEach((n, i) => {
    const y = 293 + i * 10;
    s += p(`M472 ${y + 0.5}h4M880 ${y + 0.5}h4`, '#fff', 2);
    s += `<text x="464" y="${y}" fill="#b8c8b8">${n}</text><text x="884" y="${y}" fill="#ccc">${n}</text>`;
  });

  // number columns
  for (let i = 0; i <= 40; i++) {
    const x = Math.round(475 + i * 10.1);
    const dash = (y, h, col) => {
      s += `<path d="M${x}.5 ${y}v${h}" stroke="${col}" stroke-width="3" stroke-dasharray="${2 + i % 2} 1 1 1"/>`;
    };
    const red = x > 783 ? '#5c0c1c' : '#441006';
    const green = (i > 0 && i < 9) || (i > 11 && i < 27);
    if (i < 33) {
      dash(376, 13, red);
      dash(396, 12, red);
      dash(416, 11, green ? '#10861c' : red);
    }
    dash(437, 13, red);
  }
  ['HORIZONTAL GEOMETRY', 'EXISTING LEVEL', 'PROPOSED LEVEL', 'DIFFERENCE', 'CHAINAGE'].forEach((n, i) => {
    s += `<text x="406" y="${366 + i * 20}" fill="#5a1510">${n}</text>`;
  });

  // table frame
  s += p('M401 354h483v101H401zM471.5 354v101M401 373.5h483M401 394.5h483M401 414.5h483M401 435h483', '#bfcfb4', 1.5);
  s += p('M784 354h100v101H784M784 373.5h100M784 394.5h100M784 414.5h100M784 435h100', '#eee', 1.5);
  s += p('M476 353h404', '#b83038', 2) + p('M476 354.5h404', '#d8b0a8', 1);

  // ground and design lines
  s += p('M494 325l20 0 19-1 22 18 6-19M585 320l15 2 20-2 16-2 35 2 15-3 20 1 22 1 17-5 20-1 15-1 17 1M802 314l2 23', '#c8d8c0', 1.8);
  s += p('M476 326L585 320M686 316L802 312', '#a81450', 2.5);
  s += p('M585 320L686 316M585 320v49.5M584 368.5h102M686 316v54', '#c01414', 4);
  s += p('M475 371L585 356M686 371L802 356', '#bccab4', 2) + p('M585 371Q610 356 635 356Q661 357 686 371', '#d0e4c8', 2);
  s += c(476, 326, 2.5, '#d01020', '#d01020') + c(635, 318, 2.5, '#d01020', '#d01020') + c(802, 312, 2.5, '#e81030', '#e81030');

  // annotations
  const label = (x, y, txt, col) => { s += `<text x="${x}" y="${y}" fill="${col}">${txt}</text>`; };
  label(476, 264, 'STA 0+000.00', '#641410');
  label(476, 270, 'EL= 122.528', '#641410');
  label(638, 256, 'STA 0+160.87', '#541410');
  label(638, 262, 'EL= 123.22', '#541410');
  label(804, 250, 'STA 0+322.76', '#6c1028');
  label(804, 256, 'EL= 123.97', '#6c1028');
  label(586, 271, '1:1.00', '#a0b0a0');
  label(524, 325, '0.55%', '#8a9a88');
  label(737, 316, '0.47%', '#a08a98');
  label(630, 366, 'R=1000', '#a0b0a0');
  s += '<text transform="translate(685 264) rotate(-90)" fill="#541410">STA 0+210</text>';
  s += '<text transform="translate(691 264) rotate(-90)" fill="#541410">EL=123.44</text>';

  s += p('M331 189h452v298H331z', '#b4c4b0', 1.8);
  s += p('M848 484v27M834 498h27', '#ddd', 1.5);
  s += '<path d="M256 397l26-5h7l5 6 5 17-3 7-14 8h-5l-4-4-17 5" fill="none" stroke="#208828" stroke-width="1.3" stroke-dasharray="9 4"/>';
  document.getElementById('drawing').innerHTML = s + '</g>';
}
drawProfile();
```
